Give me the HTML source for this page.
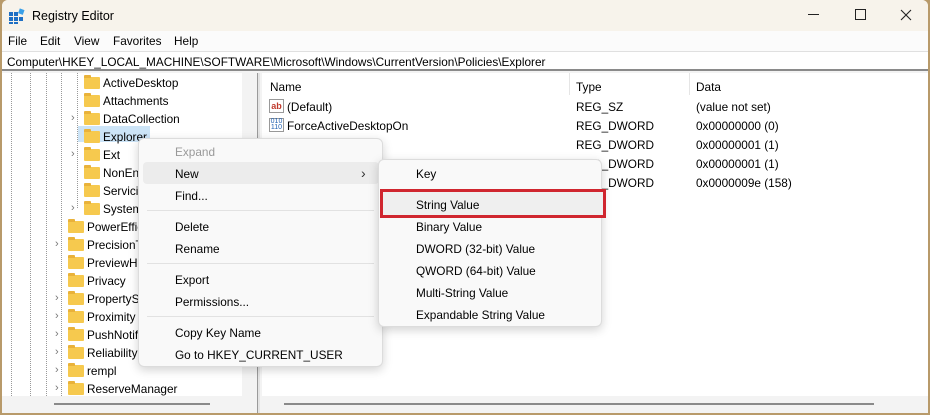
<!DOCTYPE html>
<html><head><style>
*{margin:0;padding:0;box-sizing:border-box}
body{width:930px;height:415px;overflow:hidden;background:#b89a6a;font-family:"Liberation Sans",sans-serif;font-size:11.8px;color:#000;position:relative}
.win{position:absolute;left:2px;top:0;width:926px;height:413px;background:#f3f3f3;border-radius:6px 6px 0 0;overflow:hidden}
.title{position:absolute;left:0;top:0;width:926px;height:31px;background:#f7f3eb}
.t{position:absolute;white-space:nowrap}
.menu{position:absolute;left:0;top:31px;width:926px;height:20px;background:#fbfbfb}
.addr{position:absolute;left:0;top:51px;width:926px;height:20px;background:#fff;border-top:1px solid #e0e0e0;border-bottom:2px solid #8a8a8a}
.tree{position:absolute;left:0;top:73px;width:240px;height:323px;background:#fff}
.list{position:absolute;left:260px;top:73px;width:666px;height:323px;background:#fff}
.split{position:absolute;left:255px;top:73px;width:3px;height:340px;background:#e4e4e4;border-left:1px solid #9a9a9a}
.f{position:absolute;width:16px;height:12px;background:#f6c94e;border-radius:1px}
.f:before{content:"";position:absolute;left:0;top:-2px;width:7px;height:3px;background:#e9b23a;border-radius:1px 1px 0 0}
.ar{position:absolute;color:#777;font-size:11px}
.vl{position:absolute;border-left:1px dotted #999}
.cm{position:absolute;background:#f9f9f9;border:1px solid #dcdcdc;border-radius:6px;box-shadow:0 3px 10px rgba(0,0,0,.18)}
.sep{position:absolute;height:1px;background:#e2e2e2}
</style></head><body>
<div class="win">
<div class="title">
<svg style="position:absolute;left:7px;top:8px" width="16" height="16" viewBox="0 0 16 16"><g fill="#1e6fc4"><rect x="0" y="4" width="4" height="4"/><rect x="5" y="4" width="4" height="4"/><rect x="0" y="9" width="4" height="4"/><rect x="5" y="9" width="4" height="4"/><rect x="10" y="9" width="4" height="4"/><rect x="0" y="14" width="4" height="2"/><rect x="5" y="14" width="4" height="2"/></g><rect x="10" y="1" width="5" height="5" fill="#3aa0e8" transform="rotate(20 12 3)"/></svg>
<div class="t" style="left:30px;top:9px;font-size:12.5px">Registry Editor</div>
<div class="t" style="left:806px;top:14px;width:11px;height:1px;background:#222"></div>
<div class="t" style="left:853px;top:9px;width:11px;height:11px;border:1px solid #222"></div>
<svg style="position:absolute;left:898px;top:9px" width="12" height="12"><path d="M1 1L11 11M11 1L1 11" stroke="#222" stroke-width="1.1"/></svg>
</div>
<div class="menu">
<div class="t" style="left:6px;top:3px">File</div><div class="t" style="left:38px;top:3px">Edit</div><div class="t" style="left:72px;top:3px">View</div><div class="t" style="left:111px;top:3px">Favorites</div><div class="t" style="left:172px;top:3px">Help</div>
</div>
<div class="addr"><div class="t" style="left:5px;top:3px">Computer\HKEY_LOCAL_MACHINE\SOFTWARE\Microsoft\Windows\CurrentVersion\Policies\Explorer</div></div>
<div class="tree">
<div class="vl" style="left:9px;top:0;height:323px"></div><div class="vl" style="left:28px;top:0;height:323px"></div><div class="vl" style="left:44px;top:0;height:323px"></div><div class="vl" style="left:59px;top:0;height:323px"></div><div class="vl" style="left:75px;top:0;height:135px"></div>
<div style="position:absolute;left:76px;top:53px;width:72px;height:16px;background:#cce4f7"></div>
<div class="f" style="left:82px;top:4px"></div><div class="t" style="left:101px;top:3px">ActiveDesktop</div>
<div class="f" style="left:82px;top:22px"></div><div class="t" style="left:101px;top:21px">Attachments</div>
<div class="ar" style="left:69px;top:39px">›</div><div class="f" style="left:82px;top:40px"></div><div class="t" style="left:101px;top:39px">DataCollection</div>
<div class="f" style="left:82px;top:58px"></div><div class="t" style="left:101px;top:57px">Explorer</div>
<div class="ar" style="left:69px;top:75px">›</div><div class="f" style="left:82px;top:76px"></div><div class="t" style="left:101px;top:75px">Ext</div>
<div class="f" style="left:82px;top:94px"></div><div class="t" style="left:101px;top:93px">NonEnum</div>
<div class="f" style="left:82px;top:112px"></div><div class="t" style="left:101px;top:111px">Servicing</div>
<div class="ar" style="left:69px;top:129px">›</div><div class="f" style="left:82px;top:130px"></div><div class="t" style="left:101px;top:129px">System</div>
<div class="f" style="left:66px;top:148px"></div><div class="t" style="left:85px;top:147px">PowerEfficiency</div>
<div class="ar" style="left:53px;top:165px">›</div><div class="f" style="left:66px;top:166px"></div><div class="t" style="left:85px;top:165px">PrecisionTouch</div>
<div class="f" style="left:66px;top:184px"></div><div class="t" style="left:85px;top:183px">PreviewHandlers</div>
<div class="f" style="left:66px;top:202px"></div><div class="t" style="left:85px;top:201px">Privacy</div>
<div class="ar" style="left:53px;top:219px">›</div><div class="f" style="left:66px;top:220px"></div><div class="t" style="left:85px;top:219px">PropertySystem</div>
<div class="ar" style="left:53px;top:237px">›</div><div class="f" style="left:66px;top:238px"></div><div class="t" style="left:85px;top:237px">Proximity</div>
<div class="ar" style="left:53px;top:255px">›</div><div class="f" style="left:66px;top:256px"></div><div class="t" style="left:85px;top:255px">PushNotifications</div>
<div class="ar" style="left:53px;top:273px">›</div><div class="f" style="left:66px;top:274px"></div><div class="t" style="left:85px;top:273px">Reliability</div>
<div class="ar" style="left:53px;top:291px">›</div><div class="f" style="left:66px;top:292px"></div><div class="t" style="left:85px;top:291px">rempl</div>
<div class="ar" style="left:53px;top:309px">›</div><div class="f" style="left:66px;top:310px"></div><div class="t" style="left:85px;top:309px">ReserveManager</div>
</div>
<div style="position:absolute;left:52px;top:403px;width:156px;height:2px;background:#8a8a8a"></div>
<div style="position:absolute;left:282px;top:403px;width:590px;height:2px;background:#8a8a8a"></div>
<div class="split"></div>
<div class="list">
<div style="position:absolute;left:307px;top:0;width:1px;height:22px;background:#e5e5e5"></div>
<div style="position:absolute;left:427px;top:0;width:1px;height:22px;background:#e5e5e5"></div>
<div class="t" style="left:8px;top:7px">Name</div><div class="t" style="left:314px;top:7px">Type</div><div class="t" style="left:434px;top:7px">Data</div>
<div class="t" style="left:7px;top:26px;width:15px;height:14px;border:1px solid #999;font-size:9px;color:#c0392b;font-weight:bold;line-height:12px;text-align:center">ab</div>
<div class="t" style="left:25px;top:27px">(Default)</div><div class="t" style="left:314px;top:27px">REG_SZ</div><div class="t" style="left:434px;top:27px">(value not set)</div>
<div class="t" style="left:7px;top:45px;width:15px;height:14px;border:1px solid #999;font-size:7px;color:#1e5fb0;line-height:6px;text-align:center">010<br>110</div>
<div class="t" style="left:25px;top:46px">ForceActiveDesktopOn</div><div class="t" style="left:314px;top:46px">REG_DWORD</div><div class="t" style="left:434px;top:46px">0x00000000 (0)</div>
<div class="t" style="left:314px;top:65px">REG_DWORD</div><div class="t" style="left:434px;top:65px">0x00000001 (1)</div>
<div class="t" style="left:314px;top:84px">REG_DWORD</div><div class="t" style="left:434px;top:84px">0x00000001 (1)</div>
<div class="t" style="left:314px;top:103px">REG_DWORD</div><div class="t" style="left:434px;top:103px">0x0000009e (158)</div>
</div>
</div>
<div class="cm" style="left:138px;top:138px;width:245px;height:229px">
<div style="position:absolute;left:4px;top:23px;width:236px;height:22px;background:#ececec;border-radius:4px"></div>
<div class="t" style="left:36px;top:6px;color:#999">Expand</div>
<div class="t" style="left:36px;top:28px">New</div><div class="t" style="left:222px;top:26px;font-size:14px;color:#333">›</div>
<div class="t" style="left:36px;top:50px">Find...</div>
<div class="sep" style="left:8px;right:8px;top:71px"></div>
<div class="t" style="left:36px;top:81px">Delete</div>
<div class="t" style="left:36px;top:103px">Rename</div>
<div class="sep" style="left:8px;right:8px;top:124px"></div>
<div class="t" style="left:36px;top:134px">Export</div>
<div class="t" style="left:36px;top:156px">Permissions...</div>
<div class="sep" style="left:8px;right:8px;top:177px"></div>
<div class="t" style="left:36px;top:187px">Copy Key Name</div>
<div class="t" style="left:36px;top:209px">Go to HKEY_CURRENT_USER</div>
</div>
<div class="cm" style="left:378px;top:159px;width:224px;height:168px">
<div class="t" style="left:37px;top:7px">Key</div>
<div style="position:absolute;left:1px;top:29px;width:226px;height:29px;border:3px solid #d0262f;background:#efefef"></div>
<div class="t" style="left:37px;top:38px">String Value</div>
<div class="t" style="left:37px;top:60px">Binary Value</div>
<div class="t" style="left:37px;top:82px">DWORD (32-bit) Value</div>
<div class="t" style="left:37px;top:104px">QWORD (64-bit) Value</div>
<div class="t" style="left:37px;top:126px">Multi-String Value</div>
<div class="t" style="left:37px;top:148px">Expandable String Value</div>
</div>
</body></html>
